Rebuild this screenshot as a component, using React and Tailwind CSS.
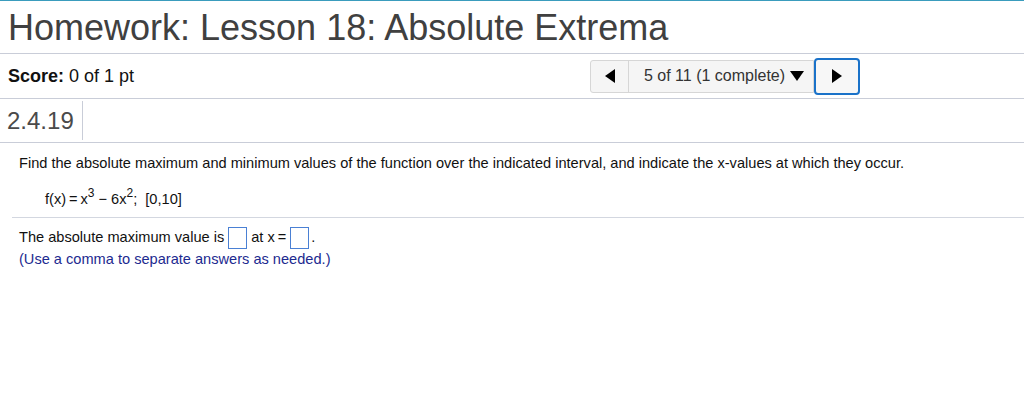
import React from 'react';

function Triangle({ dir }) {
  if (dir === 'left') {
    return (
      <svg width="10" height="14" viewBox="0 0 10 14">
        <polygon points="10,0 10,14 0,7" fill="#000" />
      </svg>
    );
  }
  if (dir === 'right') {
    return (
      <svg width="10" height="14" viewBox="0 0 10 14">
        <polygon points="0,0 0,14 10,7" fill="#000" />
      </svg>
    );
  }
  return (
    <svg width="14" height="10" viewBox="0 0 14 10">
      <polygon points="0,0 14,0 7,10" fill="#000" />
    </svg>
  );
}

function AnswerBox({ last }) {
  return (
    <span
      className={
        last
          ? 'inline-block w-[19px] h-[22px] border border-[#4a80d4] bg-white align-middle ml-[4px] mr-[2px]'
          : 'inline-block w-[19px] h-[22px] border border-[#4a80d4] bg-white align-middle ml-[4px] mr-[4px]'
      }
    />
  );
}

export default function App() {
  return (
    <div className="w-full h-[404px] bg-white border-t border-[#3a9cbd] font-['Liberation_Sans',Arial,sans-serif]">
      {/* Title */}
      <div className="h-[53px] flex items-center px-2 border-b border-[#c9cdd8]">
        <h1 className="text-[36px] leading-none text-[#404040] pt-[1px]">Homework: Lesson 18: Absolute Extrema</h1>
      </div>

      {/* Score + navigation */}
      <div className="h-[45px] flex items-center justify-between pl-2 pr-[164px] border-b border-[#c9cdd8]">
        <div className="text-[18px] text-[#111]">
          <span className="font-bold">Score:</span> 0 of 1 pt
        </div>
        <div className="flex items-center">
          <div className="flex h-[33px] border border-[#d6d6d6] rounded-l-[3px] bg-[#f5f5f5]">
            <button className="w-[38px] flex items-center justify-center border-r border-[#d6d6d6]">
              <Triangle dir="left" />
            </button>
            <button className="w-[184px] flex items-center justify-center gap-[5px] pl-[6px] text-[16px] text-[#333]">
              5 of 11 (1 complete)
              <Triangle dir="down" />
            </button>
          </div>
          <button className="w-[46px] h-[37px] flex items-center justify-center border-2 border-[#1a72c9] rounded-[4px] bg-[#f7f7f7]">
            <Triangle dir="right" />
          </button>
        </div>
      </div>

      {/* Question id */}
      <div className="h-[44px] flex border-b border-[#c9cdd8]">
        <div className="w-[83px] flex items-center px-[7px] border-r border-[#c9cdd8] my-[2px] text-[24px] text-[#4a4a4a]">
          2.4.19
        </div>
      </div>

      {/* Question */}
      <div className="pt-[12px] text-[14.6px] text-[#111]">
        <p className="px-[19px] leading-[17px]">
          Find the absolute maximum and minimum values of the function over the indicated interval, and indicate the x-values at which they occur.
        </p>
        <p className="pl-[45px] pt-[19px] pb-[9px] leading-[17px]">
          f(x)&thinsp;=&thinsp;x<sup className="text-[12px] -top-[0.6em]">3</sup> &minus; 6x<sup className="text-[12px] -top-[0.6em]">2</sup>;&nbsp;&nbsp;[0,10]
        </p>
        <div className="ml-[12px] border-t border-[#d3d7e0]" />
        <div className="px-[19px] pt-[8px]">
          <p className="leading-[22px]">
            The absolute maximum value is<AnswerBox />at x&thinsp;=<AnswerBox last />.
          </p>
          <p className="leading-[17px] text-[#1c2a8f] mt-[2px]">(Use a comma to separate answers as needed.)</p>
        </div>
      </div>
    </div>
  );
}
